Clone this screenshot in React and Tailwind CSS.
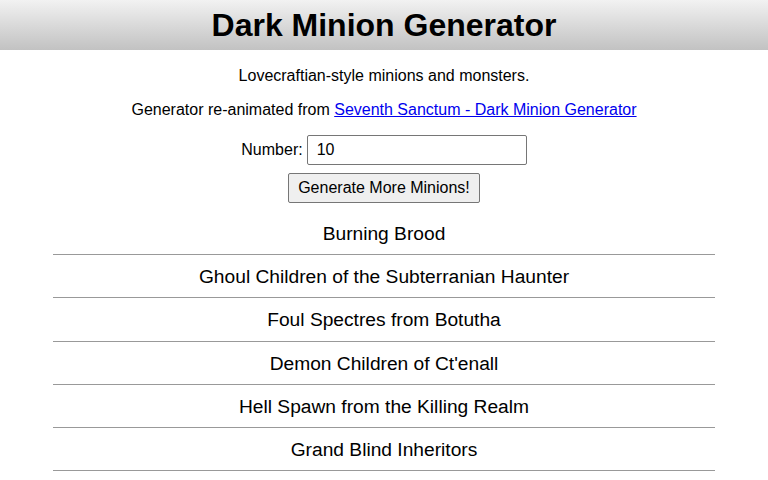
export default function App() {
  const items = [
    "Burning Brood",
    "Ghoul Children of the Subterranian Haunter",
    "Foul Spectres from Botutha",
    "Demon Children of Ct'enall",
    "Hell Spawn from the Killing Realm",
    "Grand Blind Inheritors",
  ];
  return (
    <div className="min-h-screen bg-white text-black" style={{ fontFamily: '"Liberation Sans", Arial, sans-serif' }}>
      <div className="h-[50px] flex items-center justify-center bg-gradient-to-b from-[#f2f2f2] to-[#c2c2c2]">
        <h1 className="text-[32px] font-bold leading-none">Dark Minion Generator</h1>
      </div>
      <div className="flex flex-col items-center text-[16px]">
        <p className="mt-[17px] leading-[18px]">Lovecraftian-style minions and monsters.</p>
        <p className="mt-[16px] leading-[18px]">
          Generator re-animated from{" "}
          <a href="#" className="text-[#0000ee] underline">Seventh Sanctum - Dark Minion Generator</a>
        </p>
        <div className="mt-[16px] flex items-center gap-[4px]">
          <label>Number:</label>
          <input defaultValue="10" className="w-[220px] h-[30px] border border-[#767676] rounded-[2px] px-[9px] text-[16px]" />
        </div>
        <button className="mt-[8px] h-[30px] px-[9px] border border-[#767676] rounded-[2px] bg-[#efefef] text-[16px]">Generate More Minions!</button>
      </div>
      <div className="mx-auto w-[662px] mt-[9px]">
        {items.map((t) => (
          <div key={t} className="text-center text-[19.2px] leading-[22px] pt-[11px] pb-[9.2px] border-b border-[#999]">{t}</div>
        ))}
      </div>
    </div>
  );
}
